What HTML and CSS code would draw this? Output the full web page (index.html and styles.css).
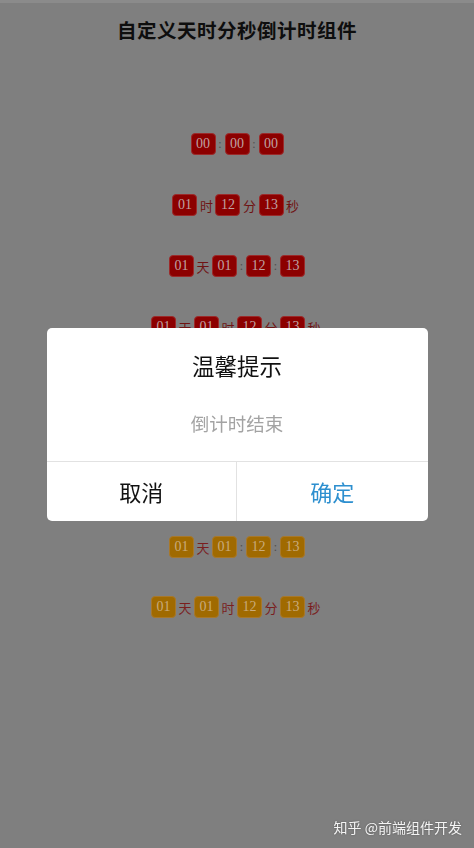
FILE: index.html
```html
<!DOCTYPE html>
<html lang="zh-CN">
<head>
<meta charset="utf-8">
<title>自定义天时分秒倒计时组件</title>
<link rel="stylesheet" href="styles.css">
</head>
<body>
<div class="topbar"></div>
<main class="page">
  <h1 class="title">自定义天时分秒倒计时组件</h1>

  <section class="rows">
    <div class="row">
      <span class="box">00</span><span class="colon">:</span><span class="box">00</span><span class="colon">:</span><span class="box">00</span>
    </div>
    <div class="row">
      <span class="box">01</span><span class="unit">时</span><span class="box">12</span><span class="unit">分</span><span class="box">13</span><span class="unit">秒</span>
    </div>
    <div class="row">
      <span class="box">01</span><span class="unit">天</span><span class="box">01</span><span class="colon">:</span><span class="box">12</span><span class="colon">:</span><span class="box">13</span>
    </div>
    <div class="row">
      <span class="box">01</span><span class="unit">天</span><span class="box">01</span><span class="unit">时</span><span class="box">12</span><span class="unit">分</span><span class="box">13</span><span class="unit">秒</span>
    </div>
    <div class="row">
      <span class="box">12</span><span class="colon">:</span><span class="box">13</span>
    </div>
    <div class="row">
      <span class="box">12</span><span class="unit">分</span><span class="box">13</span><span class="unit">秒</span>
    </div>
  </section>

  <section class="rows rows-gold">
    <div class="row">
      <span class="box">01</span><span class="unit">天</span><span class="box">01</span><span class="colon">:</span><span class="box">12</span><span class="colon">:</span><span class="box">13</span>
    </div>
    <div class="row">
      <span class="box">01</span><span class="unit">天</span><span class="box">01</span><span class="unit">时</span><span class="box">12</span><span class="unit">分</span><span class="box">13</span><span class="unit">秒</span>
    </div>
  </section>
</main>

<div class="mask">
  <div class="dialog">
    <div class="dialog-body">
      <div class="dialog-title">温馨提示</div>
      <div class="dialog-msg">倒计时结束</div>
    </div>
    <div class="dialog-actions">
      <button class="btn btn-cancel">取消</button>
      <button class="btn btn-ok">确定</button>
    </div>
  </div>
</div>

<div class="watermark">知乎 @前端组件开发</div>
</body>
</html>
```

FILE: styles.css
```css
* { box-sizing: border-box; }

html, body {
  margin: 0;
  padding: 0;
  height: 100%;
}

body {
  background: #7f7f7f;
  font-family: "Liberation Serif", "Noto Sans CJK SC", serif;
  overflow: hidden;
}

.topbar {
  height: 3px;
  background: #8b8b8b;
}

.page {
  display: flex;
  flex-direction: column;
  align-items: center;
}

.title {
  margin: 17px 0 0;
  font-family: "Noto Sans CJK SC", sans-serif;
  font-size: 19.5px;
  line-height: 20px;
  font-weight: 600;
  color: #0e0e0e;
  letter-spacing: 0.5px;
}

.rows {
  display: flex;
  flex-direction: column;
  align-items: center;
  gap: 39px;
  margin-top: 93px;
}

.rows-gold {
  margin-top: 76px;
  gap: 38px;
}

.row {
  display: flex;
  align-items: center;
  height: 22px;
}

.box {
  display: inline-flex;
  align-items: center;
  justify-content: center;
  width: 25px;
  height: 22px;
  border-radius: 4px;
  background: #8c0000;
  border: 1px solid #9c2a2a;
  color: #bfa2a2;
  font-size: 14px;
  font-family: "Liberation Serif", serif;
}

.rows-gold .box {
  background: #a06a00;
  border-color: #a8782a;
  color: #c9ab7c;
}

.colon {
  width: 9px;
  text-align: center;
  font-size: 12px;
  color: #4e4e4e;
}

.unit {
  margin: 0 2.5px;
  font-family: "Noto Sans CJK SC", sans-serif;
  font-size: 13px;
  color: #6f1414;
}

.rows-gold .unit {
  color: #7a1e1e;
}

/* modal layer */
.mask {
  position: fixed;
  inset: 0;
  display: flex;
  align-items: center;
  justify-content: center;
}

.dialog {
  width: 381px;
  background: #fff;
  border-radius: 5px;
  overflow: hidden;
}

.dialog-body {
  display: flex;
  flex-direction: column;
  align-items: center;
  height: 133px;
  padding-top: 23px;
}

.dialog-title {
  font-family: "Noto Sans CJK SC", sans-serif;
  font-size: 22.5px;
  line-height: 28px;
  color: #111;
}

.dialog-msg {
  margin-top: 32px;
  font-family: "Noto Sans CJK SC", sans-serif;
  font-size: 18.5px;
  line-height: 24px;
  color: #a3a3a3;
}

.dialog-actions {
  display: grid;
  grid-template-columns: 1fr 1fr;
  border-top: 1px solid #e2e2e2;
  height: 60px;
}

.btn {
  border: 0;
  background: none;
  padding: 0;
  font-family: "Noto Sans CJK SC", sans-serif;
  font-size: 22px;
  cursor: pointer;
}

.btn-cancel {
  color: #111;
  border-right: 1px solid #e2e2e2;
}

.btn-ok {
  color: #2d8fcf;
}

.watermark {
  position: fixed;
  right: 12px;
  bottom: 11px;
  font-family: "Noto Sans CJK SC", sans-serif;
  font-size: 14px;
  color: #f4f4f4;
  text-shadow: 0 0 2px rgba(0, 0, 0, 0.35);
}
```
